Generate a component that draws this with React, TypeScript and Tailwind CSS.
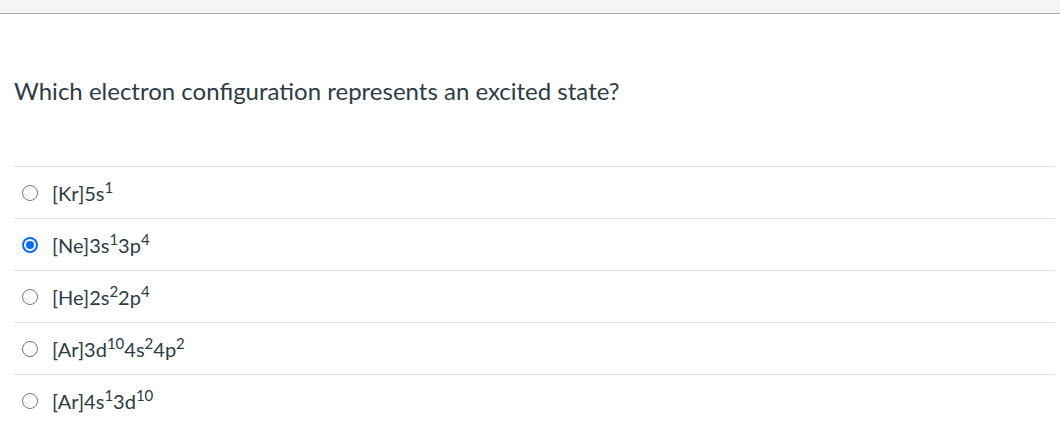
import React from "react";

const options: { parts: [string, string][]; checked?: boolean }[] = [
  { parts: [["[Kr]5s", "1"]] },
  { parts: [["[Ne]3s", "1"], ["3p", "4"]], checked: true },
  { parts: [["[He]2s", "2"], ["2p", "4"]] },
  { parts: [["[Ar]3d", "10"], ["4s", "2"], ["4p", "2"]] },
  { parts: [["[Ar]4s", "1"], ["3d", "10"]] },
];

export default function App() {
  return (
    <div className="w-[1060px] h-[429px] bg-white overflow-hidden" style={{ fontFamily: "Lato, 'Noto Sans', sans-serif" }}>
      <div className="h-[14px] bg-[#f5f5f5] border-b border-[#ababab]" />
      <div className="pl-[14px] pr-[5px]">
        <p className="mt-[59px] text-[24px] leading-[36px] text-[#2d3b45]">
          Which electron configuration represents an excited state?
        </p>
        <div className="mt-[57px]">
          {options.map((o, i) => (
            <div key={i} className="h-[52px] border-t border-[#e0e0e0] flex items-center">
              <span className="ml-[8px] mr-[14px] flex items-center justify-center">
                {o.checked ? (
                  <span className="w-[16px] h-[16px] rounded-full border-2 border-[#0b6cf5] flex items-center justify-center">
                    <span className="w-[8px] h-[8px] rounded-full bg-[#0b6cf5]" />
                  </span>
                ) : (
                  <span className="w-[16px] h-[16px] rounded-full border-[1.5px] border-[#767676]" />
                )}
              </span>
              <span className="text-[20px] text-[#2d3b45] leading-[24px]">
                {o.parts.map(([b, s], j) => (
                  <React.Fragment key={j}>
                    <span className="text-[20px]">{b}</span>
                    <sup className="text-[15px]">{s}</sup>
                  </React.Fragment>
                ))}
              </span>
            </div>
          ))}
        </div>
      </div>
    </div>
  );
}
